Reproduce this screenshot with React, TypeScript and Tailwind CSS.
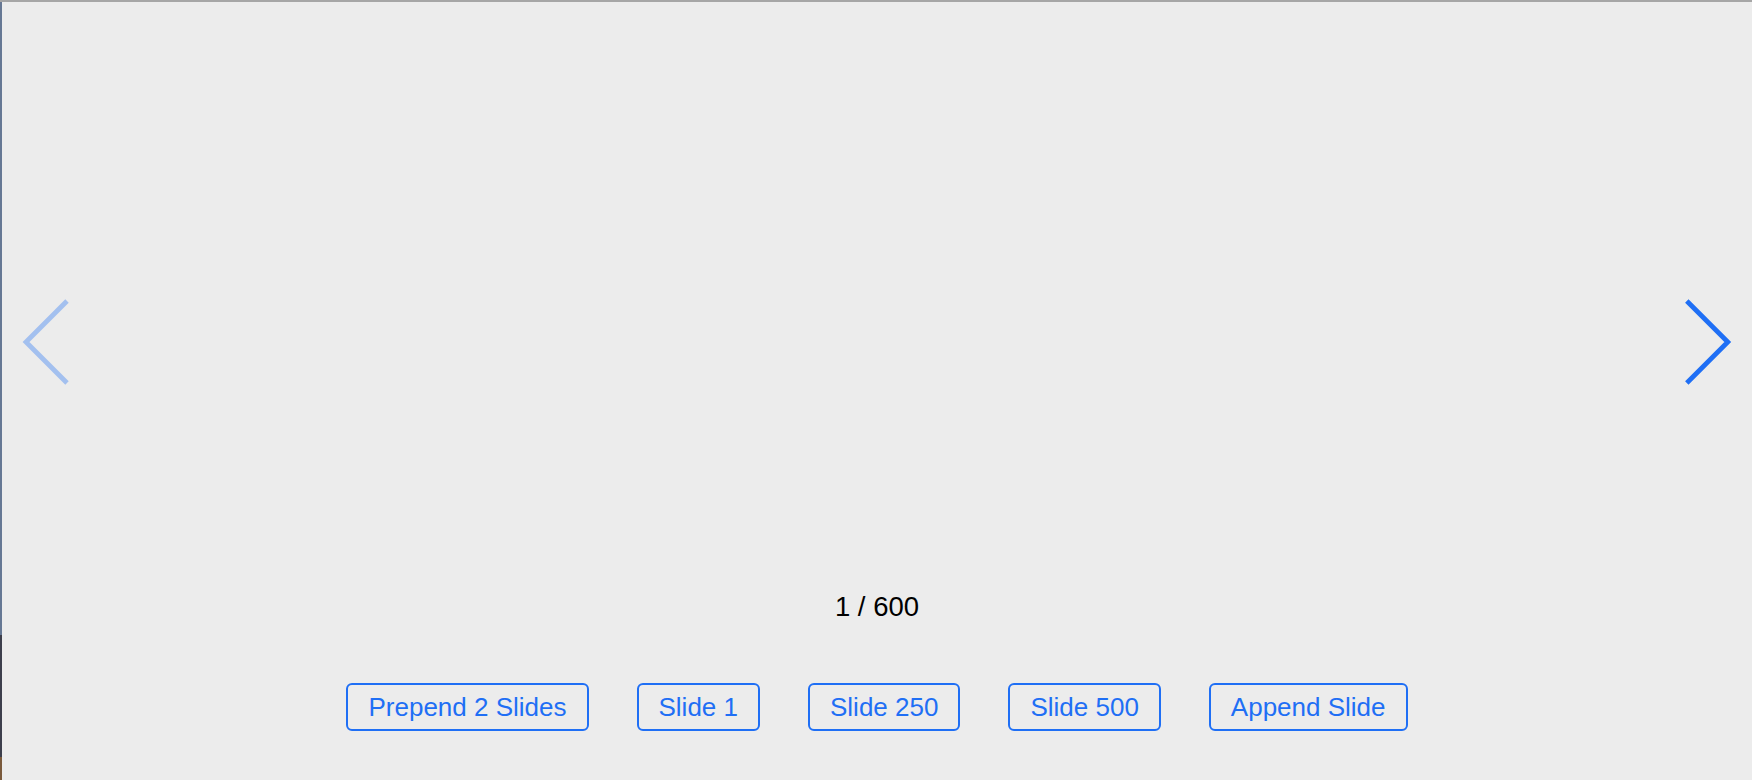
import React from "react";

const font = { fontFamily: '"Liberation Sans", Arial, Helvetica, sans-serif' };

function Btn({ children }: { children: React.ReactNode }) {
  return (
    <button className="h-[48px] px-[20px] border-2 border-[#1f6ff5] rounded-[6px] text-[#1f6ff5] text-[26px] leading-[30px] bg-transparent whitespace-nowrap">
      {children}
    </button>
  );
}

export default function App() {
  return (
    <div className="w-[1752px] h-[780px] flex flex-col bg-[#ececec] overflow-hidden" style={font}>
      <div className="h-[2px] bg-[#a6a6a6] shrink-0" />
      <div className="flex flex-1 min-h-0">
        <div className="w-[2px] shrink-0 bg-[linear-gradient(to_bottom,#667894_0,#667894_633px,#3d3f4c_633px,#3d3f4c_755px,#7a5a3c_755px)]" />
        <div className="relative flex-1 flex flex-col">
          <div className="flex-1" />
          <div className="h-[32px] text-center text-[27.5px] leading-[32px] text-black">1 / 600</div>
          <div className="mt-[60px] mb-[49px] flex justify-center gap-[48px]">
            <Btn>Prepend 2 Slides</Btn>
            <Btn>Slide 1</Btn>
            <Btn>Slide 250</Btn>
            <Btn>Slide 500</Btn>
            <Btn>Append Slide</Btn>
          </div>

          <svg className="absolute left-[18px] top-[292px] opacity-35" width="56" height="96" viewBox="0 0 56 96">
            <polyline points="47,7 6,48 47,89" fill="none" stroke="#1f6ff5" strokeWidth="4.8" strokeLinejoin="miter" strokeLinecap="butt" />
          </svg>
          <svg className="absolute right-[20px] top-[292px]" width="56" height="96" viewBox="0 0 56 96">
            <polyline points="10.8,7 51.8,48 10.8,89" fill="none" stroke="#1f6ff5" strokeWidth="4.8" strokeLinejoin="miter" strokeLinecap="butt" />
          </svg>
        </div>
      </div>
    </div>
  );
}
